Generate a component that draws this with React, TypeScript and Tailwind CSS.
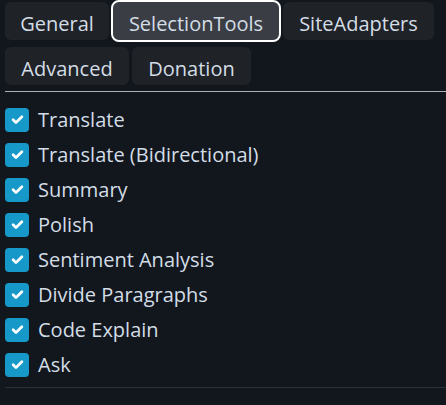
import { useState } from 'react';

const tabs = [
    { name: 'General', w: 'w-[104px]' },
    { name: 'SelectionTools', w: 'w-[166px]' },
    { name: 'SiteAdapters', w: 'w-[151px]' },
    { name: 'Advanced', w: 'w-[124px]' },
    { name: 'Donation', w: 'w-[119px]' },
];

const tools = [
    'Translate',
    'Translate (Bidirectional)',
    'Summary',
    'Polish',
    'Sentiment Analysis',
    'Divide Paragraphs',
    'Code Explain',
    'Ask',
];

function Check() {
    return (
        <svg viewBox="0 0 24 24" className="w-[15px] h-[15px]" fill="none" stroke="white" strokeWidth="4.5" strokeLinecap="round" strokeLinejoin="round">
            <path d="M5 12.5l4.5 4.5L19 7.5" />
        </svg>
    );
}

export default function App() {
    const [active, setActive] = useState('SelectionTools');
    const [checked, setChecked] = useState<Record<string, boolean>>(
        Object.fromEntries(tools.map((t) => [t, true]))
    );

    return (
        <div className="min-h-screen w-[446px] h-[405px] bg-[#12171e] text-[#d3dde6] font-['Open_Sans',sans-serif] overflow-hidden">
            {/* Tabs */}
            <div className="flex flex-wrap gap-x-[3px] gap-y-[7px] pl-[5px] pt-[2px] pr-2">
                {tabs.map((t) => (
                    <button
                        key={t.name}
                        onClick={() => setActive(t.name)}
                        className={
                            t.w +
                            ' h-[38px] pt-[5px] rounded-md text-[20px] leading-none flex items-center justify-center ' +
                            (active === t.name
                                ? 'bg-[#3a3e44] outline-2 outline-white mx-[1px]'
                                : 'bg-[#1f2227]')
                        }
                    >
                        {t.name}
                    </button>
                ))}
            </div>

            {/* Divider */}
            <div className="ml-[5px] mt-[6px] h-px bg-[#aab0b6]" />

            {/* Checkbox list */}
            <div className="ml-[5px] mt-[10px]">
                {tools.map((t) => (
                    <label key={t} className="h-[35px] flex items-center gap-[9px] cursor-pointer">
                        <span
                            onClick={() => setChecked({ ...checked, [t]: !checked[t] })}
                            className={
                                'w-[24px] h-[24px] rounded-[4px] flex items-center justify-center ' +
                                (checked[t] ? 'bg-[#1699c8]' : 'bg-[#1f2227] border border-[#555]')
                            }
                        >
                            {checked[t] && <Check />}
                        </span>
                        <span className="text-[20px] leading-none">{t}</span>
                    </label>
                ))}
            </div>

            <div className="ml-[5px] mt-[5px] h-px bg-[#293038]" />
        </div>
    );
}
